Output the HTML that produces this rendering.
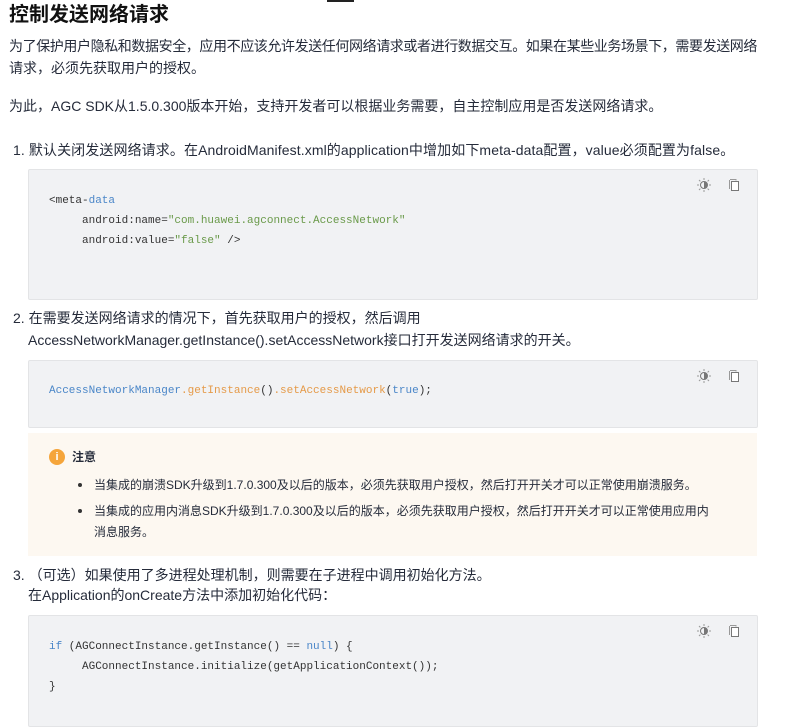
<!DOCTYPE html>
<html><head><meta charset="utf-8"><style>
body{margin:0;width:787px;height:727px;background:#fff;position:relative;overflow:hidden;font-family:"Liberation Sans","Noto Sans CJK SC",sans-serif;color:#252b3a}
.a{position:absolute;white-space:nowrap;font-size:14px;line-height:20px}
.box{position:absolute;left:28px;width:728px;background:#f1f2f4;border:1px solid #e3e4e6;border-radius:2px}
.code{position:absolute;font-family:"Liberation Mono",monospace;font-size:11px;line-height:20px;white-space:pre;color:#333}
.ic{position:absolute;top:8px;width:14px;height:14px}
.b{color:#4a86c8}.g{color:#6a9a4a}.o{color:#e59a48}
.note{position:absolute;left:28px;top:433px;width:729px;height:123px;background:#fdf8f1}
.s{font-size:12px}
.dot{position:absolute;width:4px;height:4px;border-radius:50%;background:#333}
</style></head><body>
<div style="position:absolute;left:327px;top:0;width:27px;height:2px;background:#222"></div>
<div class="a" style="left:9px;top:2px;font-size:20px;line-height:26px;font-weight:bold;color:#111">控制发送网络请求</div>
<div class="a" style="left:9px;top:36px;letter-spacing:-0.4px">为了保护用户隐私和数据安全，应用不应该允许发送任何网络请求或者进行数据交互。如果在某些业务场景下，需要发送网络</div>
<div class="a" style="left:9px;top:58px">请求，必须先获取用户的授权。</div>
<div class="a" style="left:9px;top:96px">为此，AGC SDK从1.5.0.300版本开始，支持开发者可以根据业务需要，自主控制应用是否发送网络请求。</div>
<div class="a" style="left:13px;top:140px;letter-spacing:0.1px">1. 默认关闭发送网络请求。在AndroidManifest.xml的application中增加如下meta-data配置，value必须配置为false。</div>

<div class="box" style="top:169px;height:129px">
<svg class="ic" style="left:668px" viewBox="0 0 14 14"><circle cx="7" cy="7" r="3.5" fill="none" stroke="#777"/><path d="M7 3.5A3.5 3.5 0 0 1 7 10.5Z" fill="#777"/><path d="M7 0v2M7 12v2M0 7h2M12 7h2M2 2l1.4 1.4M10.6 10.6L12 12M2 12l1.4-1.4M10.6 3.4L12 2" stroke="#999"/></svg>
<svg class="ic" style="left:698px" viewBox="0 0 14 14"><path d="M3 1.5h6v1" fill="none" stroke="#999"/><rect x="4.5" y="3.5" width="7" height="9" fill="#fff" stroke="#777"/><path d="M2.5 2v9" stroke="#999"/></svg>
<div class="code" style="left:20px;top:21px">&lt;meta-<span class="b">data</span>
     android:name=<span class="g">"com.huawei.agconnect.AccessNetwork"</span>
     android:value=<span class="g">"false"</span> /&gt;</div>
</div>

<div class="a" style="left:13px;top:308px">2. 在需要发送网络请求的情况下，首先获取用户的授权，然后调用</div>
<div class="a" style="left:28px;top:330px">AccessNetworkManager.getInstance().setAccessNetwork接口打开发送网络请求的开关。</div>

<div class="box" style="top:360px;height:66px">
<svg class="ic" style="left:668px" viewBox="0 0 14 14"><circle cx="7" cy="7" r="3.5" fill="none" stroke="#777"/><path d="M7 3.5A3.5 3.5 0 0 1 7 10.5Z" fill="#777"/><path d="M7 0v2M7 12v2M0 7h2M12 7h2M2 2l1.4 1.4M10.6 10.6L12 12M2 12l1.4-1.4M10.6 3.4L12 2" stroke="#999"/></svg>
<svg class="ic" style="left:698px" viewBox="0 0 14 14"><path d="M3 1.5h6v1" fill="none" stroke="#999"/><rect x="4.5" y="3.5" width="7" height="9" fill="#fff" stroke="#777"/><path d="M2.5 2v9" stroke="#999"/></svg>
<div class="code" style="left:20px;top:20px"><span class="b">AccessNetworkManager</span><span class="o">.getInstance</span>()<span class="o">.setAccessNetwork</span>(<span class="b">true</span>);</div>
</div>

<div class="note">
<div style="position:absolute;left:21px;top:16px;width:16px;height:16px;border-radius:50%;background:#f5a53b;color:#fff;font-size:11px;font-weight:bold;text-align:center;line-height:16px">i</div>
<div class="a s" style="left:44px;top:14px;font-weight:bold">注意</div>
<div class="dot" style="left:50px;top:50px"></div>
<div class="a s" style="left:66px;top:42px">当集成的崩溃SDK升级到1.7.0.300及以后的版本，必须先获取用户授权，然后打开开关才可以正常使用崩溃服务。</div>
<div class="dot" style="left:50px;top:76px"></div>
<div class="a s" style="left:66px;top:68px">当集成的应用内消息SDK升级到1.7.0.300及以后的版本，必须先获取用户授权，然后打开开关才可以正常使用应用内</div>
<div class="a s" style="left:66px;top:89px">消息服务。</div>
</div>

<div class="a" style="left:13px;top:565px">3. （可选）如果使用了多进程处理机制，则需要在子进程中调用初始化方法。</div>
<div class="a" style="left:28px;top:585px">在Application的onCreate方法中添加初始化代码：</div>

<div class="box" style="top:615px;height:110px">
<svg class="ic" style="left:668px" viewBox="0 0 14 14"><circle cx="7" cy="7" r="3.5" fill="none" stroke="#777"/><path d="M7 3.5A3.5 3.5 0 0 1 7 10.5Z" fill="#777"/><path d="M7 0v2M7 12v2M0 7h2M12 7h2M2 2l1.4 1.4M10.6 10.6L12 12M2 12l1.4-1.4M10.6 3.4L12 2" stroke="#999"/></svg>
<svg class="ic" style="left:698px" viewBox="0 0 14 14"><path d="M3 1.5h6v1" fill="none" stroke="#999"/><rect x="4.5" y="3.5" width="7" height="9" fill="#fff" stroke="#777"/><path d="M2.5 2v9" stroke="#999"/></svg>
<div class="code" style="left:20px;top:21px"><span class="b">if</span> (AGConnectInstance.getInstance() == <span class="b">null</span>) {
     AGConnectInstance.initialize(getApplicationContext());
}</div>
</div>
</body></html>
